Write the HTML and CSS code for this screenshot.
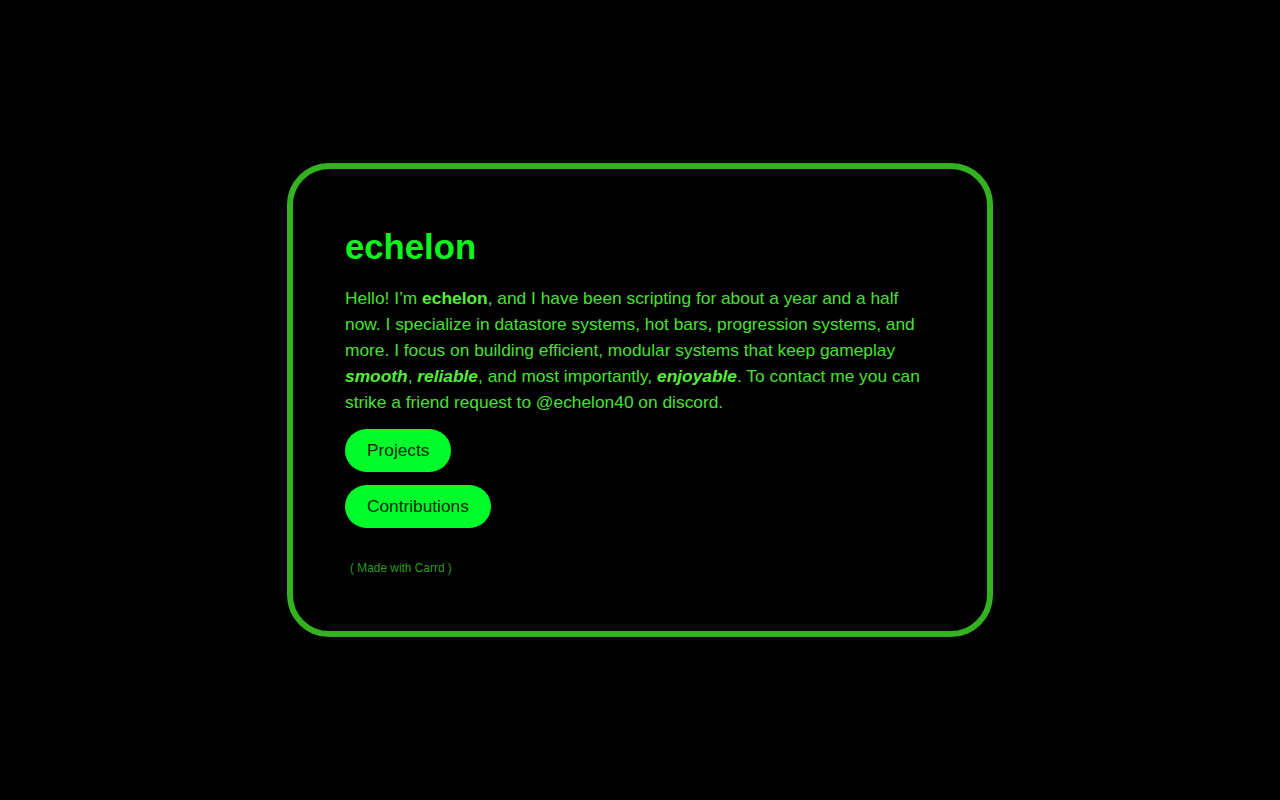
FILE: index.html
```html
<!DOCTYPE html>
<html>
<head>
<meta charset="utf-8">
<link rel="stylesheet" href="styles.css">
</head>
<body>
<main class="page">
  <section class="card">
    <h1 class="title">echelon</h1>
    <p class="bio">Hello! I’m <strong>echelon</strong>, and I have been scripting for about a year and a half now. I specialize in datastore systems, hot bars, progression systems, and more. I focus on building efficient, modular systems that keep gameplay <strong><em>smooth</em></strong>, <strong><em>reliable</em></strong>, and most importantly, <strong><em>enjoyable</em></strong>. To contact me you can strike a friend request to @echelon40 on discord.</p>
    <div class="buttons">
      <a class="btn" href="#">Projects</a>
      <a class="btn" href="#">Contributions</a>
    </div>
    <p class="credit">( Made with Carrd )</p>
  </section>
</main>
</body>
</html>
```

FILE: styles.css
```css
html, body {
  margin: 0;
  padding: 0;
  background: #000;
}
body {
  font-family: "Liberation Sans", Arial, sans-serif;
}
.page {
  min-height: 800px;
  display: flex;
  align-items: center;
  justify-content: center;
}
.card {
  box-sizing: border-box;
  width: 706px;
  height: 474px;
  border: 6px solid #34b222;
  border-radius: 42px;
  padding: 56px 62px 0 52px;
}
.title {
  margin: 0;
  font-size: 34.7px;
  font-weight: bold;
  color: #0df41f;
  line-height: 44px;
}
.bio {
  margin: 16px 0 0 0;
  font-size: 17.35px;
  line-height: 26px;
  color: #47e032;
}
.bio strong {
  color: #55ee3a;
}
.buttons {
  display: flex;
  flex-direction: column;
  align-items: flex-start;
  gap: 13px;
  margin-top: 14px;
}
.btn {
  display: inline-block;
  height: 43px;
  line-height: 43px;
  padding: 0 22px;
  border-radius: 22px;
  background: #00fc2a;
  color: #0a2a0c;
  font-size: 17.3px;
  text-decoration: none;
}
.credit {
  margin: 33px 0 0 5px;
  font-size: 11.9px;
  color: #279a1c;
}
```
